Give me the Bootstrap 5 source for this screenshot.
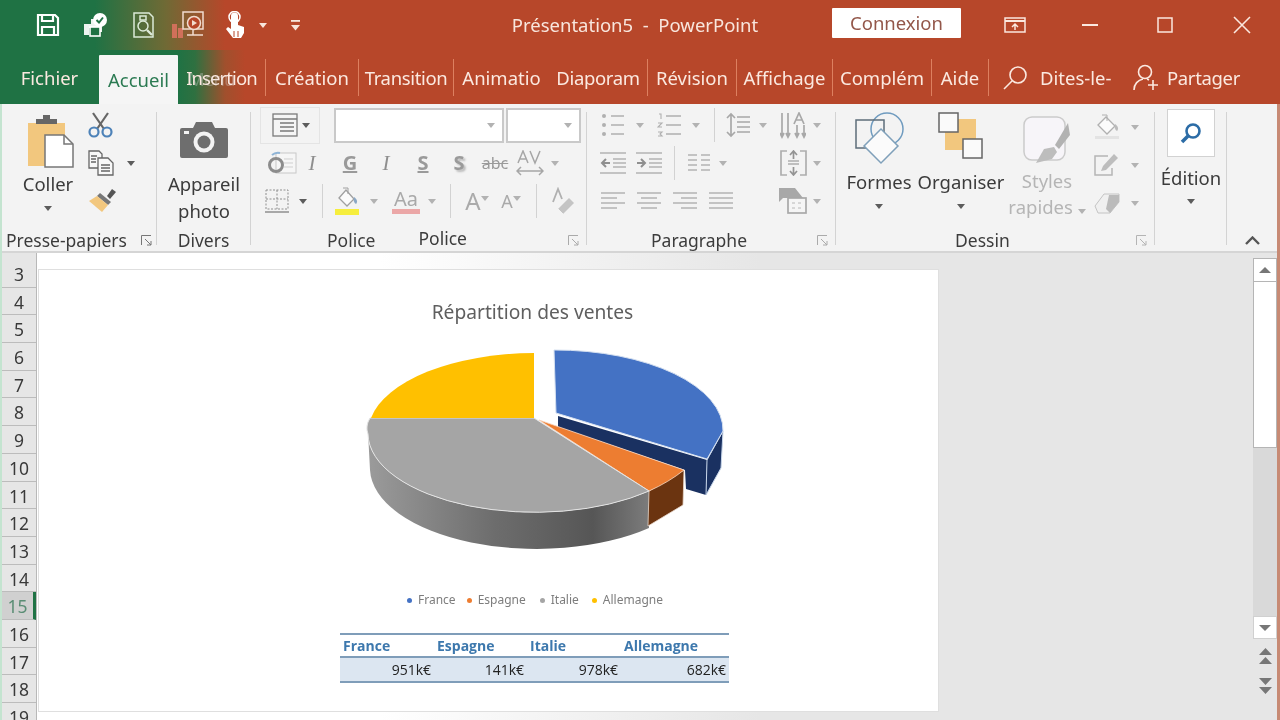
<!DOCTYPE html>
<html lang="fr">
<head>
<meta charset="utf-8">
<title>Présentation5 - PowerPoint</title>
<link href="https://cdn.jsdelivr.net/npm/bootstrap@5.3.0/dist/css/bootstrap.min.css" rel="stylesheet">
<style>
html,body{margin:0;height:720px;overflow:hidden;background:#f3f3f3}
.app{position:relative;width:1280px;height:720px;overflow:hidden;font-family:"Noto Sans","Open Sans",sans-serif;filter:blur(.35px)}
.app::after{content:"";position:absolute;left:0;right:0;top:104px;bottom:0;pointer-events:none;box-shadow:inset 2px 0 #c4e4d0,inset -3px 0 #c78a74}
.titlebar{display:grid;height:50px;align-items:center;justify-items:center;padding-left:26px;color:#f8e6dd;font-size:18.5px;
 grid-template-columns:43px 54px 41px 51px 40px 15px 51px 191px 246px 74px 129px 108px 42px 108px 45px;
 background:linear-gradient(90deg,#1f7244 0,#1f7244 95px,#6f6a35 165px,#b7472a 225px)}
.titlebar .cr{border-top-color:#f8e6dd}
.doc-title{white-space:nowrap}
.signin{width:129px;height:30px;line-height:30px;background:#fff;border-radius:1px;color:#93574a;text-align:center;font-size:18.5px;margin-top:-4px}
.tabbar{display:grid;height:54px;color:#fbe9e0;font-size:18.5px;white-space:nowrap;
 grid-template-columns:99px 79px 88px 93px 95px 95px 99px 89px 96px 99px 57px 51px 85px 42px 1fr;
 background:linear-gradient(90deg,#1f7244 0,#1f7244 178px,#2f7040 195px,#a0502d 225px,#b7472a 245px)}
.tabcell{height:37px;margin-top:9px;display:flex;align-items:center;justify-content:center;overflow:hidden;position:relative}
.tabsep{border-right:1.5px solid #dd8060}
.tab-on{background:#f5f5f5;color:#2b7a52;height:49px;margin-top:5px;border-radius:1px 1px 0 0}
.ghost{position:absolute;left:10px;top:6px;opacity:.32;color:#d9d9d9}
.tabstart{justify-content:flex-start}
.tight{letter-spacing:-.35px}
.tighter{letter-spacing:-.9px}
.ribbon{display:flex;height:149px;background:#f3f3f3;border-bottom:2px solid #d5d5d5;color:#3b3b3b}
.grp{display:flex;flex-direction:column;flex:none;position:relative}
.grp-line::after{content:"";position:absolute;right:0;top:8px;bottom:6px;width:1px;background:#d3d3d3}
.grp-a{width:157px}.grp-b{width:94px}.grp-c{width:336px}.grp-d{width:249px}.grp-e{width:319px}.grp-f{width:72px}.grp-g{width:50px}
.grp-body{flex:1 1 auto;display:flex;min-height:0}
.grp-label{height:22px;flex:none;display:flex;align-items:center;font-size:17.5px;color:#3c3c3c;white-space:nowrap}
.launch{width:11px;height:11px;flex:none}
.bigbtn{display:flex;flex-direction:column;align-items:center;font-size:18.5px;line-height:27px;flex:none;white-space:nowrap}
.bigbtn svg{flex:none}
.cr{display:inline-block;width:0;height:0;border-left:4px solid transparent;border-right:4px solid transparent;border-top:5px solid #5c5c5c}
.cr-l{border-top-color:#b2b2b2}
.col-clip{width:96px;margin-right:-8px;padding-top:11px}
.col-clip svg{margin:0 0 1px 6px}
.col-clip .cr{margin-top:9px}
.col-tools{padding:8px 0 0 0;display:flex;flex-direction:column;gap:12px}
.toolrow{display:flex;align-items:center;gap:13px;height:26px}
.col-cam{width:94px;padding-top:17px}
.col-cam svg{margin-bottom:12px}
.subcol{width:70px;padding-top:2px}
.gridrow{display:grid;height:38px;align-items:center;justify-items:center}
.mainrows{width:266px;margin-left:13px;padding-top:2px}
.combo{display:flex;height:38px;padding-top:2px;gap:2px}
.combox{height:35px;background:#fff;border:2px solid #c9c9c9;display:flex;align-items:center;justify-content:flex-end;padding-right:7px}
.combo-1{width:170px}.combo-2{width:75px}
.r-sub1{grid-template-columns:70px}
.r-sub2{grid-template-columns:60px 2px}
.r-sub3{grid-template-columns:51px 2px 36px}
.ghostbox{width:60px;height:37px;display:flex;align-items:center;justify-content:center;gap:4px;border:1px solid #e4e4e4;margin-left:8px}
.r-f2{grid-template-columns:32px 40px 34px 38px 34px 36px 14px}
.r-f3{grid-template-columns:26px 28px 36px 16px 20px 34px 34px 16px 38px}
.fg{font-family:"Liberation Serif",serif;font-size:21px;color:#8e8e8e;line-height:1}
.fs{font-family:"Noto Sans",sans-serif;font-size:20px;font-weight:700;color:#9a9a9a;line-height:1}
.fb{font-weight:700}.fi{font-style:italic;font-weight:400}.fu{text-decoration:underline}
.fabc{font-size:16px;font-weight:400;text-decoration:line-through}
.fshadow{text-shadow:2px 2px 2px #bbb}
.vsep{width:1px;height:34px;background:#d2d2d2}
.aa{position:relative;font-size:20px;color:#a9a9a9;line-height:1;border-bottom:5px solid #eba7a7;width:28px;text-align:center}
.growa{font-size:24px;color:#aaa;line-height:1}
.growb{font-size:18px;color:#aaa;line-height:1}
.parrows{padding-left:9px;padding-top:2px}
.r-p1{grid-template-columns:34px 20px 38px 16px 20px 28px 21px 40px 8px}
.r-p2{grid-template-columns:34px 38px 12px 38px 10px 45px 40px 8px}
.r-p3{grid-template-columns:34px 38px 34px 38px 33px 40px 8px}
.d-form{width:64px;margin-left:11px;padding-top:8px}
.d-org{width:84px;margin-left:8px;padding-top:8px}
.d-sty{width:74px;margin-left:7px;padding-top:11px;color:#b5b5b5;line-height:26px}
.d-form svg,.d-org svg{height:53px;margin-bottom:3px}
.d-sty svg{margin-bottom:3px}
.d-form .cr,.d-org .cr{margin-top:9px}
.d-sm{margin-left:6px;padding-top:4px;width:56px}
.d-row{display:grid;grid-template-columns:34px 22px;height:38px;align-items:center;justify-items:center}
.col-ed{width:72px;padding-top:5px}
.edbox{width:48px;height:48px;background:#fff;border:1.5px solid #d2d2d2;display:flex;align-items:center;justify-content:center;margin-bottom:7px}
.col-ed .cr{margin-top:8px}
.lab-a{padding-left:6px;gap:14px}
.lab-b{justify-content:center;padding-right:1px}
.lab-c{padding-left:76px}.lab-c b{font-weight:400}
.lab-c .p2{margin-left:43px;margin-top:-3px}
.lab-c .launch{margin-left:101px}
.lab-d{padding-left:64px}.lab-d .launch{margin-left:70px}
.lab-e{padding-left:119px}.lab-e .launch{margin-left:126px}
.lab-g{justify-content:flex-end;padding-right:17px}
.workspace{display:flex;height:467px;background:linear-gradient(90deg,#fff 0,#fff 380px,#e6e6e6 760px)}
.rowhead{width:37px;flex:none;background:#e6e6e6;border-right:1.5px solid #b8b8b8;padding-top:7px}
.rowhead div{height:27.7px;line-height:29px;text-align:center;font-size:17.5px;color:#3a3a3a;border-bottom:1.5px solid #bcbcbc;padding-left:2px}
.rowhead .rowsel{background:#d0d0d0;color:#5a8d74;border-right:3px solid #1f7244}
.stage{flex:1 1 auto;min-width:0;padding:16px 0 0 1px;display:flex}
.slide{width:901px;height:443px;background:#fff;border:1px solid #dfdfdf;flex:none;padding-left:302px;padding-top:27px}
.chart-title{font-size:19.2px;color:#5f5f5f;width:385px;text-align:center;line-height:30px;margin-left:-1px;white-space:nowrap}
.chart{display:block;margin-top:11px;margin-left:10px}
.legend-row{width:390px;display:flex;font-size:12px;color:#7d7d7d;margin-top:29px;height:22px;align-items:center;padding-left:66px}
.dot{width:5px;height:5px;border-radius:50%;margin-right:6px;flex:none}
.dot-1{background:#4472c4}.dot-2{background:#ed7d31;margin-left:11px}.dot-3{background:#a5a5a5;margin-left:14px}.dot-4{background:#ffc000;margin-left:13px}
.sales{width:389px;margin:22px 0 0 -1px;border-collapse:collapse;table-layout:fixed;font-family:"Open Sans",sans-serif;font-size:14px}
.sales th{color:#3d78ad;font-weight:700;padding:0 0 0 3px;height:23px;border-top:2px solid #7f9db9;border-bottom:2px solid #7f9db9}
.sales td{color:#222;background:#dce6f1;text-align:right;padding:0 3px 0 0;height:25px;border-bottom:2px solid #7f9db9}
.c1{width:94px}.c2{width:93px}.c3{width:94px}.c4{width:108px}
.vbar{width:24px;flex:none;margin:-11px 3px 0 auto;display:flex;flex-direction:column;align-items:stretch}
.vbtn{height:24px;flex:none;background:#fff;border:1.5px solid #b5b5b5;display:flex;align-items:center;justify-content:center}
.vthumb{height:166px;flex:none;background:#fff;border:1.5px solid #b5b5b5;border-top:0}
.vtrack{height:168px;flex:none;background:#d9d9d9}
.vdown{height:23px;border-color:#d0d0d0}
.vup-cr{border-top:0;border-bottom:6px solid #777;border-left-width:6px;border-right-width:6px}
.vdn-cr{border-top:6px solid #777;border-left-width:6px;border-right-width:6px}
.dbl{display:flex;justify-content:center;margin-top:9px;height:18px;flex:none}
.dbl + .dbl{margin-top:10px}
</style>
</head>
<body>
<div class="app">
  <!-- title bar -->
  <div class="titlebar">
    <svg width="24" height="24" viewBox="0 0 24 24" fill="none" stroke="#fff" stroke-width="2.2"><path d="M2 2h17l3 3v17H2z"/><path d="M6 2v6h11V2M6 22v-8h12v8"/></svg>
    <svg width="28" height="26" viewBox="0 0 28 26"><path d="M2 12h7V7h5v4h6v9h-4v-4H7v7H2z" fill="#fff" opacity=".92"/><rect x="8" y="15" width="10" height="9" fill="#1f7244" stroke="#fff" stroke-width="1.6"/><circle cx="18" cy="8" r="7" fill="#fff"/><path d="M14.500 8l2.500 2.500 4-5" fill="none" stroke="#1f7244" stroke-width="2"/></svg>
    <svg width="24" height="26" viewBox="0 0 24 26" fill="none" stroke="#dcead8" stroke-width="1.5"><path d="M2 1h15l4 4v20H2z"/><circle cx="11" cy="14" r="5"/><path d="M15 18l5 5" stroke-width="2.400"/><path d="M8 4h6v4H8z"/></svg>
    <svg width="36" height="28" viewBox="0 0 36 28" fill="none" stroke="#f2dccf" stroke-width="1.5"><rect x="0" y="13" width="5" height="14" fill="#d0705a" stroke="none"/><rect x="6" y="17" width="5" height="10" fill="#d0705a" stroke="none"/><rect x="11" y="1" width="20" height="17"/><circle cx="22" cy="12" r="6.500" fill="#b7472a"/><path d="M20 9l5 3-5 3z" fill="#f2dccf" stroke="none"/><path d="M15 24h16M21 19v5"/></svg>
    <svg width="22" height="28" viewBox="0 0 22 28"><path d="M7 5a3.500 3.500 0 017 0v9l6 2v6l-3 5H9l-7-9 2-2 3 2z" fill="#fff"/><circle cx="10.500" cy="6" r="5.500" fill="none" stroke="#fff" stroke-width="1.500"/><path d="M10 20v6M14 20v6" stroke="#b7472a" stroke-width="1"/></svg>
    <span class="cr"></span>
    <svg width="9" height="11" viewBox="0 0 9 11" fill="#f7e4da"><rect x="0" y="0" width="9" height="1.800"/><path d="M0 5h9L4.500 10.500z"/></svg>
    <span></span>
    <span class="doc-title">Présentation5&nbsp; -&nbsp; PowerPoint</span>
    <span></span>
    <span class="signin">Connexion</span>
    <svg width="22" height="16" viewBox="0 0 22 16" fill="none" stroke="#fbe8df" stroke-width="1.500"><rect x="1" y="1" width="20" height="14"/><path d="M1 4h20" stroke-width="2"/><path d="M11 13V7M8 10l3-3 3 3"/></svg>
    <svg width="16" height="3" viewBox="0 0 16 3"><rect width="16" height="2" fill="#fbe8df"/></svg>
    <svg width="16" height="16" viewBox="0 0 16 16" fill="none" stroke="#fbe8df" stroke-width="1.500"><rect x="1" y="1" width="14" height="14"/></svg>
    <svg width="18" height="18" viewBox="0 0 18 18" stroke="#fbe8df" stroke-width="1.600"><path d="M1 1l16 16M17 1L1 17"/></svg>
  </div>

  <!-- tabs -->
  <div class="tabbar">
    <div class="tabcell">Fichier</div>
    <div class="tabcell tab-on">Accueil</div>
    <div class="tabcell tabsep tighter">Insertion<span class="ghost">Menu</span></div>
    <div class="tabcell tabsep">Création</div>
    <div class="tabcell tabsep tight">Transition</div>
    <div class="tabcell">Animatio</div>
    <div class="tabcell tabsep tight">Diaporam</div>
    <div class="tabcell tabsep">Révision</div>
    <div class="tabcell tabsep">Affichage</div>
    <div class="tabcell tabsep">Complém</div>
    <div class="tabcell tabsep">Aide</div>
    <div class="tabcell"><svg width="26" height="26" viewBox="0 0 26 26" fill="none" stroke="#fbe9e0" stroke-width="1.600"><circle cx="16" cy="10" r="8"/><path d="M10 16L2 24"/></svg></div>
    <div class="tabcell tabstart">Dites-le-</div>
    <div class="tabcell"><svg width="26" height="27" viewBox="0 0 26 27" fill="none" stroke="#fbe9e0" stroke-width="1.600"><circle cx="12" cy="8" r="6.500"/><path d="M1 26c0-6 4-10 9-11M14 15l2 1M20 16v10M15 21h10"/></svg></div>
    <div class="tabcell tabstart tight">Partager</div>
  </div>

  <!-- ribbon -->
  <div class="ribbon">
    <section class="grp grp-a grp-line">
      <div class="grp-body">
        <div class="bigbtn col-clip">
          <svg width="48" height="54" viewBox="0 0 48 54"><rect x="1" y="8" width="37" height="43" fill="#f2c77e"/><path d="M9 8V4h7V0h7v4h7v5H9z" fill="#666"/><path d="M18 20h19l9 9v23H18z" fill="#fff" stroke="#777" stroke-width="1.500"/><path d="M37 20v9h9" fill="none" stroke="#777" stroke-width="1.500"/></svg>
          <span>Coller</span>
          <span class="cr"></span>
        </div>
        <div class="col-tools">
          <svg width="25" height="26" viewBox="0 0 25 26" fill="none"><path d="M5 1l11 16M20 1L9 17" stroke="#666" stroke-width="2.200"/><circle cx="6" cy="20" r="4.500" stroke="#4d82b8" stroke-width="2.200"/><circle cx="19" cy="20" r="4.500" stroke="#4d82b8" stroke-width="2.200"/></svg>
          <div class="toolrow">
            <svg width="26" height="26" viewBox="0 0 26 26" fill="#f8f8f8" stroke="#666" stroke-width="1.300"><path d="M1 1h10l3 3v14H1z"/><path d="M10 8h10l5 5v12H10z"/><path d="M3 6h6M3 9h5M3 12h5M13 15h9M13 18h9M13 21h9" fill="none"/></svg>
            <span class="cr"></span>
          </div>
          <svg width="28" height="25" viewBox="0 0 28 25"><path d="M19 8l5-7 4 3-6 7z" fill="#555"/><path d="M12 5l11 9-3 3L9 8z" fill="#777"/><path d="M9 8l11 9-6 7L1 13z" fill="#f2c77e"/></svg>
        </div>
      </div>
      <div class="grp-label lab-a">Presse-papiers<svg class="launch" viewBox="0 0 11 11" fill="none" stroke="#777"><path d="M.5 10V.5H10M4 4l6 6M10 6v4H6"/></svg></div>
    </section>

    <section class="grp grp-b grp-line">
      <div class="grp-body">
        <div class="bigbtn col-cam">
          <svg width="48" height="37" viewBox="0 0 48 37"><path d="M2 7h11l3-6h16l3 6h11a2 2 0 012 2v26a2 2 0 01-2 2H2a2 2 0 01-2-2V9a2 2 0 012-2z" fill="#6e6e6e"/><circle cx="24" cy="21" r="10.500" fill="#f3f3f3"/><circle cx="24" cy="21" r="6.500" fill="#6e6e6e"/><rect x="4" y="10" width="5" height="3" fill="#f3f3f3"/></svg>
          <span>Appareil</span>
          <span>photo</span>
        </div>
      </div>
      <div class="grp-label lab-b">Divers</div>
    </section>

    <section class="grp grp-c grp-line">
      <div class="grp-body">
        <div class="subcol">
          <div class="gridrow r-sub1">
            <div class="ghostbox">
              <svg width="28" height="24" viewBox="0 0 28 24" fill="#f5f5f5" stroke="#7a7a7a" stroke-width="1.300"><rect x="3" y="1" width="24" height="22"/><path d="M3 6h24M10 10h14M10 14h14M10 18h14" fill="none"/></svg>
              <span class="cr"></span>
            </div>
          </div>
          <div class="gridrow r-sub2">
            <svg width="32" height="24" viewBox="0 0 32 24"><rect x="11" y="2" width="20" height="20" fill="#f6f6f6" stroke="#c8c8c8"/><path d="M19 8h9M19 12h9M19 16h9" stroke="#cfcfcf"/><circle cx="11" cy="14" r="6.500" fill="none" stroke="#8c8c8c" stroke-width="3"/><path d="M7 4a9 9 0 018-2" fill="none" stroke="#8fb4d6" stroke-width="2"/></svg>
            <span class="fg fi">I</span>
          </div>
          <div class="gridrow r-sub3">
            <svg width="24" height="24" viewBox="0 0 24 24" fill="none" stroke="#8f8f8f" stroke-dasharray="2 1.500"><rect x="1" y="1" width="22" height="19"/><path d="M12 1v19M1 10h22"/><path d="M0 23h24" stroke-dasharray="none" stroke-width="1.500"/></svg>
            <span class="cr"></span>
            <span class="vsep"></span>
          </div>
        </div>
        <div class="mainrows">
          <div class="combo">
            <div class="combox combo-1"><span class="cr cr-l"></span></div>
            <div class="combox combo-2"><span class="cr cr-l"></span></div>
          </div>
          <div class="gridrow r-f2">
            <span class="fs fb fu">G</span>
            <span class="fg fi">I</span>
            <span class="fs fb fu">S</span>
            <span class="fs fb fshadow">S</span>
            <span class="fs fabc">abc</span>
            <svg width="28" height="26" viewBox="0 0 28 26" fill="none" stroke="#a6a6a6" stroke-width="1.500"><path d="M2 13L7 1l5 12M4 9h6M14 1l5 12 5-12"/><path d="M1 21h26M5 17l-4 4 4 4M23 17l4 4-4 4"/></svg>
            <span class="cr cr-l"></span>
          </div>
          <div class="gridrow r-f3">
            <svg width="26" height="30" viewBox="0 0 26 30"><path d="M5 12l7-8 8 9-7 7z" fill="#fbfbfb" stroke="#a0a0a0" stroke-width="1.300"/><path d="M9 2h5v6" fill="none" stroke="#a0a0a0"/><path d="M20 11c3 2 4 5 2 7-2-1-3-4-2-7z" fill="#8aa7c4"/><rect x="1" y="23" width="24" height="6" fill="#f6ee3d"/></svg>
            <span class="cr cr-l"></span>
            <span class="aa">Aa</span>
            <span class="cr cr-l"></span>
            <span class="vsep"></span>
            <span class="growa">A<sup class="cr cr-l"></sup></span>
            <span class="growb">A<sup class="cr cr-l"></sup></span>
            <span class="vsep"></span>
            <svg width="24" height="28" viewBox="0 0 24 28"><path d="M2 15L7 2l4 10" fill="none" stroke="#b0b0b0" stroke-width="1.800"/><path d="M7 22l11-11 5 5-11 11z" fill="#c4c4c4"/><path d="M7 22l5 5" stroke="#f3f3f3"/></svg>
          </div>
        </div>
      </div>
      <div class="grp-label lab-c"><b>Police</b><b class="p2">Police</b><svg class="launch" viewBox="0 0 11 11" fill="none" stroke="#aaa"><path d="M.5 10V.5H10M4 4l6 6M10 6v4H6"/></svg></div>
    </section>

    <section class="grp grp-d grp-line">
      <div class="grp-body">
        <div class="parrows">
          <div class="gridrow r-p1">
            <svg width="24" height="24" viewBox="0 0 24 24" stroke="#b0b0b0" stroke-width="1.600"><path d="M10 3h13M10 12h13M10 21h13"/><circle cx="3" cy="3" r="2" fill="#b0b0b0" stroke="none"/><circle cx="3" cy="12" r="2" fill="#b0b0b0" stroke="none"/><circle cx="3" cy="21" r="2" fill="#b0b0b0" stroke="none"/></svg>
            <span class="cr cr-l"></span>
            <svg width="24" height="24" viewBox="0 0 24 24" stroke="#b0b0b0" stroke-width="1.600"><path d="M9 3h15M9 12h15M9 21h15"/><path d="M2 1h2v5M1 10h4l-4 4h4M1 19h4l-2 2 2 2H1" fill="none" stroke-width="1.100"/></svg>
            <span class="cr cr-l"></span>
            <span class="vsep"></span>
            <svg width="24" height="26" viewBox="0 0 24 26" fill="none" stroke="#a8a8a8" stroke-width="1.700"><path d="M11 5h13M11 10h13M11 15h13M11 20h13M5 2v22M1 6l4-4 4 4M1 20l4 4 4-4"/></svg>
            <span class="cr cr-l"></span>
            <svg width="26" height="27" viewBox="0 0 26 27" fill="none" stroke="#a8a8a8" stroke-width="1.700"><path d="M2 1v23M8 1v23M0 21l2 4 2-4M6 21l2 4 2-4M17 13v11M24 13v11M15 21l2 4 2-4M22 21l2 4 2-4M14 12l5-11 5 11M16 8h6"/></svg>
            <span class="cr cr-l"></span>
          </div>
          <div class="gridrow r-p2">
            <svg width="26" height="22" viewBox="0 0 26 22" fill="none" stroke="#b4b4b4" stroke-width="1.700"><path d="M0 1h26M13 7h13M13 11h13M13 15h13M0 21h26"/><path d="M10 11H2M6 7l-4 4 4 4" stroke="#8f8f8f" stroke-width="2"/></svg>
            <svg width="26" height="22" viewBox="0 0 26 22" fill="none" stroke="#b4b4b4" stroke-width="1.700"><path d="M0 1h26M13 7h13M13 11h13M13 15h13M0 21h26"/><path d="M1 11h8M5 7l4 4-4 4" stroke="#8f8f8f" stroke-width="2"/></svg>
            <span class="vsep"></span>
            <svg width="22" height="18" viewBox="0 0 22 18" stroke="#b4b4b4" stroke-width="1.700"><path d="M0 1h9M13 1h9M0 6h9M13 6h9M0 11h9M13 11h9M0 16h9M13 16h9"/></svg>
            <span class="cr cr-l"></span>
            <span></span>
            <svg width="27" height="26" viewBox="0 0 27 26" fill="none" stroke="#aeaeae" stroke-width="1.700"><path d="M7 1H1v24h6M20 1h6v24h-6M8 11h11M8 14h11"/><path d="M13.500 9V2M10 5l3.500-4L17 5M13.500 17v7M10 21l3.500 4 3.500-4" stroke="#949494"/></svg>
            <span class="cr cr-l"></span>
          </div>
          <div class="gridrow r-p3">
            <svg width="24" height="18" viewBox="0 0 24 18" stroke="#b4b4b4" stroke-width="1.700"><path d="M0 1h24M0 6h16M0 11h24M0 16h16"/></svg>
            <svg width="24" height="18" viewBox="0 0 24 18" stroke="#b4b4b4" stroke-width="1.700"><path d="M0 1h24M4 6h16M0 11h24M4 16h16"/></svg>
            <svg width="24" height="18" viewBox="0 0 24 18" stroke="#b4b4b4" stroke-width="1.700"><path d="M0 1h24M8 6h16M0 11h24M8 16h16"/></svg>
            <svg width="24" height="18" viewBox="0 0 24 18" stroke="#b4b4b4" stroke-width="1.700"><path d="M0 1h24M0 6h24M0 11h24M0 16h24"/></svg>
            <span></span>
            <svg width="28" height="28" viewBox="0 0 28 28"><path d="M0 1h16l8 10H4l-4 4z" fill="#a8a8a8"/><rect x="9" y="11" width="18" height="15" fill="#f5f5f5" stroke="#a8a8a8" stroke-width="1.700"/><path d="M13 16h3M19 16h3M13 21h3M19 21h3" stroke="#b8b8b8"/></svg>
            <span class="cr cr-l"></span>
          </div>
        </div>
      </div>
      <div class="grp-label lab-d">Paragraphe<svg class="launch" viewBox="0 0 11 11" fill="none" stroke="#aaa"><path d="M.5 10V.5H10M4 4l6 6M10 6v4H6"/></svg></div>
    </section>

    <section class="grp grp-e grp-line">
      <div class="grp-body">
        <div class="bigbtn d-form">
          <svg width="50" height="53" viewBox="0 0 50 53" fill="#fbfbfb"><circle cx="33" cy="17" r="16" fill="none" stroke="#6f9bbf" stroke-width="1.500"/><rect x="2" y="8" width="28" height="28" fill="none" stroke="#5d6d7a" stroke-width="1.500"/><rect x="15" y="22" width="24" height="24" transform="rotate(45 27 34)" stroke="#7fa0ba" stroke-width="1.500"/></svg>
          <span>Formes</span>
          <span class="cr"></span>
        </div>
        <div class="bigbtn d-org">
          <svg width="46" height="53" viewBox="0 0 46 53"><rect x="7" y="7" width="31" height="31" fill="#f2c77e"/><rect x="1" y="1" width="19" height="19" fill="#fafafa" stroke="#666" stroke-width="1.500"/><rect x="25" y="27" width="19" height="19" fill="#fafafa" stroke="#666" stroke-width="1.500"/></svg>
          <span>Organiser</span>
          <span class="cr"></span>
        </div>
        <div class="bigbtn d-sty">
          <svg width="50" height="50" viewBox="0 0 50 50"><rect x="2" y="2" width="41" height="43" rx="8" fill="#f7f5f9" stroke="#cbcbcb" stroke-width="1.500"/><path d="M14 48l8-14 10-2 3 5-5 7z" fill="#bdbdbd"/><path d="M33 30l13-22 2 12-11 14z" fill="#b2b2b2"/></svg>
          <span>Styles</span>
          <span>rapides <span class="cr cr-l"></span></span>
        </div>
        <div class="d-sm">
          <div class="d-row">
            <svg width="26" height="26" viewBox="0 0 26 26"><path d="M4 11l8-8 9 9-8 8z" fill="#fbfbfb" stroke="#b0b0b0" stroke-width="1.300"/><path d="M8 1h5v6" fill="none" stroke="#b0b0b0"/><path d="M21 10c3 2 4 5 2 7-2-1-3-4-2-7z" fill="#bbb"/><rect x="1" y="22" width="24" height="3" fill="#e3e3e3"/></svg>
            <span class="cr cr-l"></span>
          </div>
          <div class="d-row">
            <svg width="26" height="24" viewBox="0 0 26 24"><path d="M14 3H1v19h17v-7" fill="none" stroke="#b5b5b5" stroke-width="1.500"/><path d="M7 18l2-5 11-12 4 4L12 17z" fill="#bdbdbd"/></svg>
            <span class="cr cr-l"></span>
          </div>
          <div class="d-row">
            <svg width="26" height="22" viewBox="0 0 26 22"><path d="M1 14L10 2h15v8l-9 11H4z" fill="#f0f0f0" stroke="#c4c4c4"/><path d="M15 3h10v7l-9 11-4-4z" fill="#bbb"/></svg>
            <span class="cr cr-l"></span>
          </div>
        </div>
      </div>
      <div class="grp-label lab-e">Dessin<svg class="launch" viewBox="0 0 11 11" fill="none" stroke="#b4b4b4"><path d="M.5 10V.5H10M4 4l6 6M10 6v4H6"/></svg></div>
    </section>

    <section class="grp grp-f grp-line">
      <div class="grp-body">
        <div class="bigbtn col-ed">
          <div class="edbox"><svg width="22" height="22" viewBox="0 0 22 22" fill="none"><circle cx="13" cy="9" r="6.500" stroke="#2c6ca6" stroke-width="2.600"/><path d="M8 14l-6 6" stroke="#2c6ca6" stroke-width="3.600"/></svg></div>
          <span>Édition</span>
          <span class="cr"></span>
        </div>
      </div>
    </section>

    <section class="grp grp-g">
      <div class="grp-body"></div>
      <div class="grp-label lab-g"><svg width="15" height="9" viewBox="0 0 15 9" fill="none" stroke="#555" stroke-width="2.400"><path d="M1 8l6.500-6.500L14 8"/></svg></div>
    </section>
  </div>

  <!-- work area -->
  <div class="workspace">
    <div class="rowhead">
      <div>3</div><div>4</div><div>5</div><div>6</div><div>7</div><div>8</div><div>9</div><div>10</div><div>11</div><div>12</div><div>13</div><div>14</div><div class="rowsel">15</div><div>16</div><div>17</div><div>18</div><div>19</div>
    </div>
    <div class="stage">
      <div class="slide">
        <div class="chart-title">Répartition des ventes</div>
        <svg class="chart" width="390" height="222" viewBox="350 340 390 222">
          <defs>
            <linearGradient id="gside" x1="0" x2="1" y1="0" y2="0">
              <stop offset="0" stop-color="#9b9b9b"/><stop offset=".45" stop-color="#6d6d6d"/><stop offset=".8" stop-color="#565656"/><stop offset="1" stop-color="#7c7c7c"/>
            </linearGradient>
          </defs>
          <path d="M557 418L706 462 705 497 685 491 684 472 557 429Z" fill="#1a3161"/>
          <path d="M706 462L722 433 720 470 705 497Z" fill="#1a3161" stroke="#c7d6ea"/>
          <path d="M553 352A168 80 0 0 1 722 433L706 461 555 415Z" fill="#4472c4" stroke="#d5e0f0" stroke-width="1"/>
          <path d="M367 434A167 79 0 0 0 648 493L648 530A167 81 0 0 1 369 472Z" fill="url(#gside)"/>
          <path d="M648 493L683 472 682 507 647 528Z" fill="#6b3410" stroke="#e7d8cc" stroke-width=".8"/>
          <path d="M538 422L683 472Q668 484 648 493Z" fill="#ed7d31" stroke="#f7d7c0" stroke-width=".8"/>
          <path d="M533 420L369 420Q364 428 367 436A167 79 0 0 0 648 493Z" fill="#a5a5a5" stroke="#e4e4e4" stroke-width="1"/>
          <path d="M533 420L370 420A167 79 0 0 1 533 355Z" fill="#ffc000"/>
        </svg>
        <div class="legend-row">
          <span class="dot dot-1"></span>France
          <span class="dot dot-2"></span>Espagne
          <span class="dot dot-3"></span>Italie
          <span class="dot dot-4"></span>Allemagne
        </div>
        <table class="sales">
          <colgroup><col class="c1"><col class="c2"><col class="c3"><col class="c4"></colgroup>
          <thead><tr><th>France</th><th>Espagne</th><th>Italie</th><th>Allemagne</th></tr></thead>
          <tbody><tr><td>951k€</td><td>141k€</td><td>978k€</td><td>682k€</td></tr></tbody>
        </table>
      </div>
      <div class="vbar">
        <div class="vbtn"><span class="cr vup-cr"></span></div>
        <div class="vthumb"></div>
        <div class="vtrack"></div>
        <div class="vbtn vdown"><span class="cr vdn-cr"></span></div>
        <div class="dbl"><svg width="13" height="18" viewBox="0 0 13 18" fill="#777"><path d="M0 7l6.500-7L13 7zM0 16l6.500-7L13 16z"/></svg></div>
        <div class="dbl"><svg width="13" height="18" viewBox="0 0 13 18" fill="#777"><path d="M0 2l6.500 7L13 2zM0 11l6.500 7L13 11z"/></svg></div>
      </div>
    </div>
  </div>
</div>
<script src="https://cdn.jsdelivr.net/npm/bootstrap@5.3.0/dist/js/bootstrap.bundle.min.js"></script>
</body>
</html>
